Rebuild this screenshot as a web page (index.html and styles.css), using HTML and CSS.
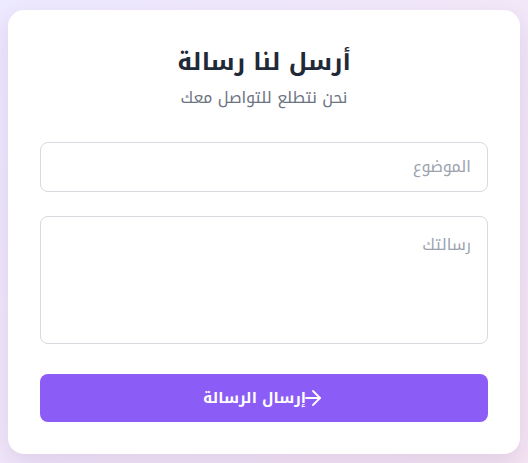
FILE: index.html
```html
<!DOCTYPE html>
<html lang="ar" dir="rtl">
<head>
    <meta charset="UTF-8">
    <meta name="viewport" content="width=device-width, initial-scale=1.0">
    <title>أرسل لنا رسالة</title>
    <link rel="stylesheet" href="styles.css">
</head>
<body>
    <div class="card">
        <div class="header">
            <h2 class="title">أرسل لنا رسالة</h2>
            <p class="subtitle">نحن نتطلع للتواصل معك</p>
        </div>
        <form class="form" onsubmit="return false">
            <input type="text" class="field" placeholder="الموضوع">
            <textarea class="field area" placeholder="رسالتك"></textarea>
            <button type="submit" class="send">
                <svg width="24" height="24" viewBox="0 0 24 24" fill="none" stroke="currentColor" stroke-width="1.8" stroke-linecap="round" stroke-linejoin="round">
                    <path d="M5 12h14"/>
                    <path d="M12 5l7 7-7 7"/>
                </svg>
                <span>إرسال الرسالة</span>
            </button>
        </form>
    </div>
</body>
</html>
```

FILE: styles.css
```css
* {
    box-sizing: border-box;
}

html, body {
    height: 100%;
}

body {
    margin: 0;
    display: flex;
    align-items: center;
    justify-content: center;
    background: linear-gradient(135deg, #ede9fe, #f5e6f3);
    font-family: "Noto Kufi Arabic", "Noto Sans", sans-serif;
}

.card {
    width: 512px;
    background-color: #ffffff;
    border-radius: 16px;
    padding: 32px;
    box-shadow: 0 10px 25px rgba(88, 28, 135, 0.12);
}

.header {
    text-align: center;
    margin-bottom: 32px;
}

.title {
    margin: 0;
    font-size: 24px;
    font-weight: 700;
    color: #1f2937;
    line-height: 40px;
}

.subtitle {
    margin: 4px 0 0;
    font-size: 16px;
    color: #6b7280;
    line-height: 24px;
}

.form {
    display: flex;
    flex-direction: column;
    gap: 24px;
}

.field {
    width: 100%;
    height: 50px;
    padding: 12px 16px;
    border: 1px solid #d6d9de;
    border-radius: 8px;
    font-family: inherit;
    font-size: 16px;
    color: #1f2937;
    background-color: #ffffff;
    outline: none;
}

.field::placeholder {
    color: #9ca3af;
}

.area {
    height: 128px;
    resize: none;
}

.send {
    margin-top: 6px;
    height: 48px;
    display: flex;
    align-items: center;
    justify-content: center;
    border: none;
    border-radius: 8px;
    background-color: #8b5cf6;
    color: #ffffff;
    font-family: inherit;
    font-size: 15px;
    font-weight: 700;
    cursor: pointer;
}

.send svg {
    margin-left: -5px;
}
```
